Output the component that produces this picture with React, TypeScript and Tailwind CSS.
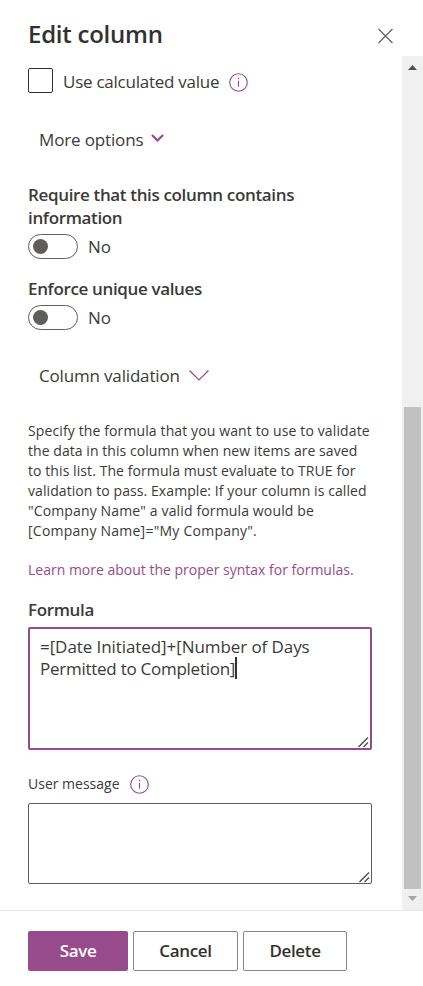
import type { ReactNode } from 'react';

const helpLines = [
  { text: 'Specify the formula that you want to use to validate', className: 'tracking-[0.12px]' },
  { text: 'the data in this column when new items are saved', className: 'tracking-[0.06px]' },
  { text: 'to this list. The formula must evaluate to TRUE for', className: 'tracking-[0.08px]' },
  { text: 'validation to pass. Example: If your column is called', className: 'tracking-[0.08px]' },
  { text: '"Company Name" a valid formula would be', className: 'tracking-[0.14px]' },
  { text: '[Company Name]="My Company".', className: 'tracking-[0.24px]' },
];

function InfoIcon() {
  return (
    <svg className="w-[19px] h-[19px] shrink-0" viewBox="0 0 19 19" fill="none" stroke="#984b8b">
      <circle cx="9.5" cy="9.5" r="8.8" strokeWidth="1.1" />
      <path d="M9.5 7.7v6" strokeWidth="1.2" />
      <path d="M9.5 4.8v1.4" strokeWidth="1.4" />
    </svg>
  );
}

function Toggle() {
  return (
    <div className="flex items-center h-[25px]">
      <button className="w-[50px] h-[25px] shrink-0 flex items-center pl-1 rounded-full border border-[#605e5c]">
        <span className="w-[15px] h-[15px] rounded-full bg-[#605e5c]" />
      </button>
      <span className="ml-[10px] text-[17px]">No</span>
    </div>
  );
}

function ResizeGrip() {
  return (
    <svg className="absolute right-[1px] bottom-0 w-[11px] h-[11px]" viewBox="0 0 11 11" fill="none" stroke="#4d4d4d" strokeWidth="1.4">
      <path d="M0.5 10L10 0.5M5.5 10L10 5.5" />
    </svg>
  );
}

function Label({ children, className = '' }: { children: ReactNode; className?: string }) {
  return <div className={`text-[17px] font-semibold leading-[23px] tracking-[-0.35px] ${className}`}>{children}</div>;
}

export default function App() {
  return (
    <div className="w-[423px] h-[986px] flex flex-col overflow-hidden bg-white text-[#3b3a39] whitespace-nowrap font-['Open_Sans','Noto_Sans',sans-serif]">
      {/* Header */}
      <header className="h-14 shrink-0 flex items-start justify-between pl-7 pr-[30px]">
        <h1 className="mt-[17px] text-[24px] leading-[34px] font-semibold tracking-[-0.25px] text-[#323130]">Edit column</h1>
        <svg className="mt-7 w-[15px] h-4" viewBox="0 0 15 16" fill="none" stroke="#605e5c" strokeWidth="1.1">
          <path d="M0.5 1L14.5 15M14.5 1L0.5 15" />
        </svg>
      </header>

      {/* Scrollable form */}
      <div className="h-[854px] shrink-0 flex">
        <main className="w-[402px] pl-7 pr-[30px] pt-3">
          <label className="h-[25px] flex items-center">
            <span className="w-[25px] h-[25px] shrink-0 rounded-[2px] border border-[#323130]" />
            <span className="w-[166px] pl-[10px] pt-[3px] text-[17px] tracking-[-0.25px]">Use calculated value</span>
            <span className="ml-[10px] mt-[3px]"><InfoIcon /></span>
          </label>

          <div className="mt-[35px] pl-[11px] h-6 flex items-center">
            <span className="w-[112px] text-[17px] tracking-[-0.15px]">More options</span>
            <svg className="-mt-1 w-[13px] h-2" viewBox="0 0 13 8" fill="none" stroke="#984b8b" strokeWidth="2.2">
              <path d="M1 1L6.5 6.5L12 1" />
            </svg>
          </div>

          <Label className="mt-[31px] mb-[5px]">
            Require that this column contains
            <br />
            information
          </Label>
          <Toggle />

          <Label className="mt-[18px] mb-[5px]">Enforce unique values</Label>
          <Toggle />

          <div className="mt-[34px] pl-[11px] h-6 flex items-center">
            <span className="w-[150px] text-[17px] tracking-[-0.17px]">Column validation</span>
            <svg className="-mt-[2px] w-5 h-[11px]" viewBox="0 0 20 11" fill="none" stroke="#984b8b" strokeWidth="1.2">
              <path d="M0.5 0.5L10 10L19.5 0.5" />
            </svg>
          </div>

          <div className="mt-[33px] text-[14px] leading-5">
            {helpLines.map((line) => (
              <p key={line.text} className={line.className}>{line.text}</p>
            ))}
          </div>
          <a className="block mt-[19px] text-[14px] leading-5 text-[#984b8b]">
            Learn more about the proper syntax for formulas.
          </a>

          <Label className="mt-[18px]">Formula</Label>
          <div className="relative mt-[6px] h-[123px] rounded-[2px] border-2 border-[#984b8b] pl-[10px] pt-[7px] text-[17px] leading-[22px]">
            <p className="tracking-[-0.08px]">=[Date Initiated]+[Number of Days</p>
            <p className="flex">
              <span className="tracking-[-0.26px]">Permitted to Completion]</span>
              <span className="w-[2px] h-[22px] -mt-px bg-[#323130]" />
            </p>
            <ResizeGrip />
          </div>

          <div className="mt-[21px] h-6 flex items-center">
            <span className="w-[92px] text-[14px]">User message</span>
            <span className="ml-[10px] mt-[2px]"><InfoIcon /></span>
          </div>
          <div className="relative mt-[8px] h-[81px] rounded-[2px] border border-[#605e5c]">
            <ResizeGrip />
          </div>
        </main>

        {/* Scrollbar */}
        <div className="w-[21px] flex flex-col items-center bg-[#f0f0f0]">
          <svg className="mt-[9px] w-[9px] h-[5px]" viewBox="0 0 9 5" fill="#505050">
            <path d="M0 5L4.5 0L9 5Z" />
          </svg>
          <div className="mt-[337px] w-[17px] h-[482px] bg-[#c1c1c1]" />
          <svg className="mt-[7px] w-[9px] h-[5px]" viewBox="0 0 9 5" fill="#a3a3a3">
            <path d="M0 0L4.5 5L9 0Z" />
          </svg>
        </div>
      </div>

      {/* Footer actions */}
      <footer className="h-[76px] shrink-0 flex gap-[5px] border-t border-[#eaeaea] pl-7 pt-5 text-[17px] font-semibold tracking-[-0.35px] text-[#323130]">
        <button className="w-[100px] h-10 rounded-[2px] bg-[#984b8b] text-white">Save</button>
        <button className="w-[105px] h-10 rounded-[2px] border border-[#8a8886]">Cancel</button>
        <button className="w-[104px] h-10 rounded-[2px] border border-[#8a8886]">Delete</button>
      </footer>
    </div>
  );
}
